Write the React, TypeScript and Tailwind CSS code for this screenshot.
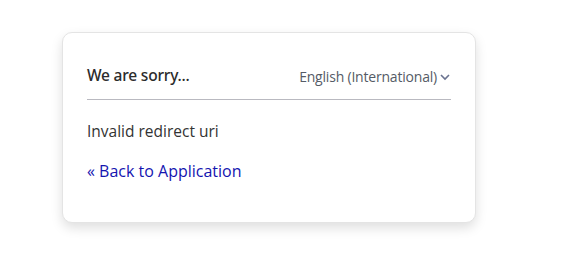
import React from "react";

export default function App() {
  return (
    <div className="w-[580px] h-[274px] bg-white" style={{ fontFamily: '"Open Sans", "Noto Sans", sans-serif' }}>
      <div className="pt-[32px] pl-[62px]">
        <div className="w-[414px] h-[191px] bg-white rounded-[10px] border border-[#e4e4e4] shadow-[0_5px_12px_rgba(0,0,0,0.13)] px-[24px] pt-[30px]">
          <div className="flex items-center justify-between border-b border-[#b9b9c0] pb-[10px] h-[37px]">
            <span className="text-[15.5px] text-[#2b2b2b] font-medium tracking-[-0.2px]" style={{ fontFamily: '"Noto Sans", sans-serif' }}>We are sorry...</span>
            <span className="flex items-center text-[14px] text-[#555b66] tracking-[-0.2px]">
              English (International)
              <svg width="12" height="12" viewBox="0 0 12 12" className="ml-[2px] mt-[2px]">
                <path d="M2 4 L6 8 L10 4" fill="none" stroke="#6a7390" strokeWidth="1.6" />
              </svg>
            </span>
          </div>
          <div className="mt-[20px] text-[15.5px] text-[#333]">Invalid redirect uri</div>
          <a href="#" className="block mt-[16px] text-[16px] text-[#1414b0]">« Back to Application</a>
        </div>
      </div>
    </div>
  );
}
